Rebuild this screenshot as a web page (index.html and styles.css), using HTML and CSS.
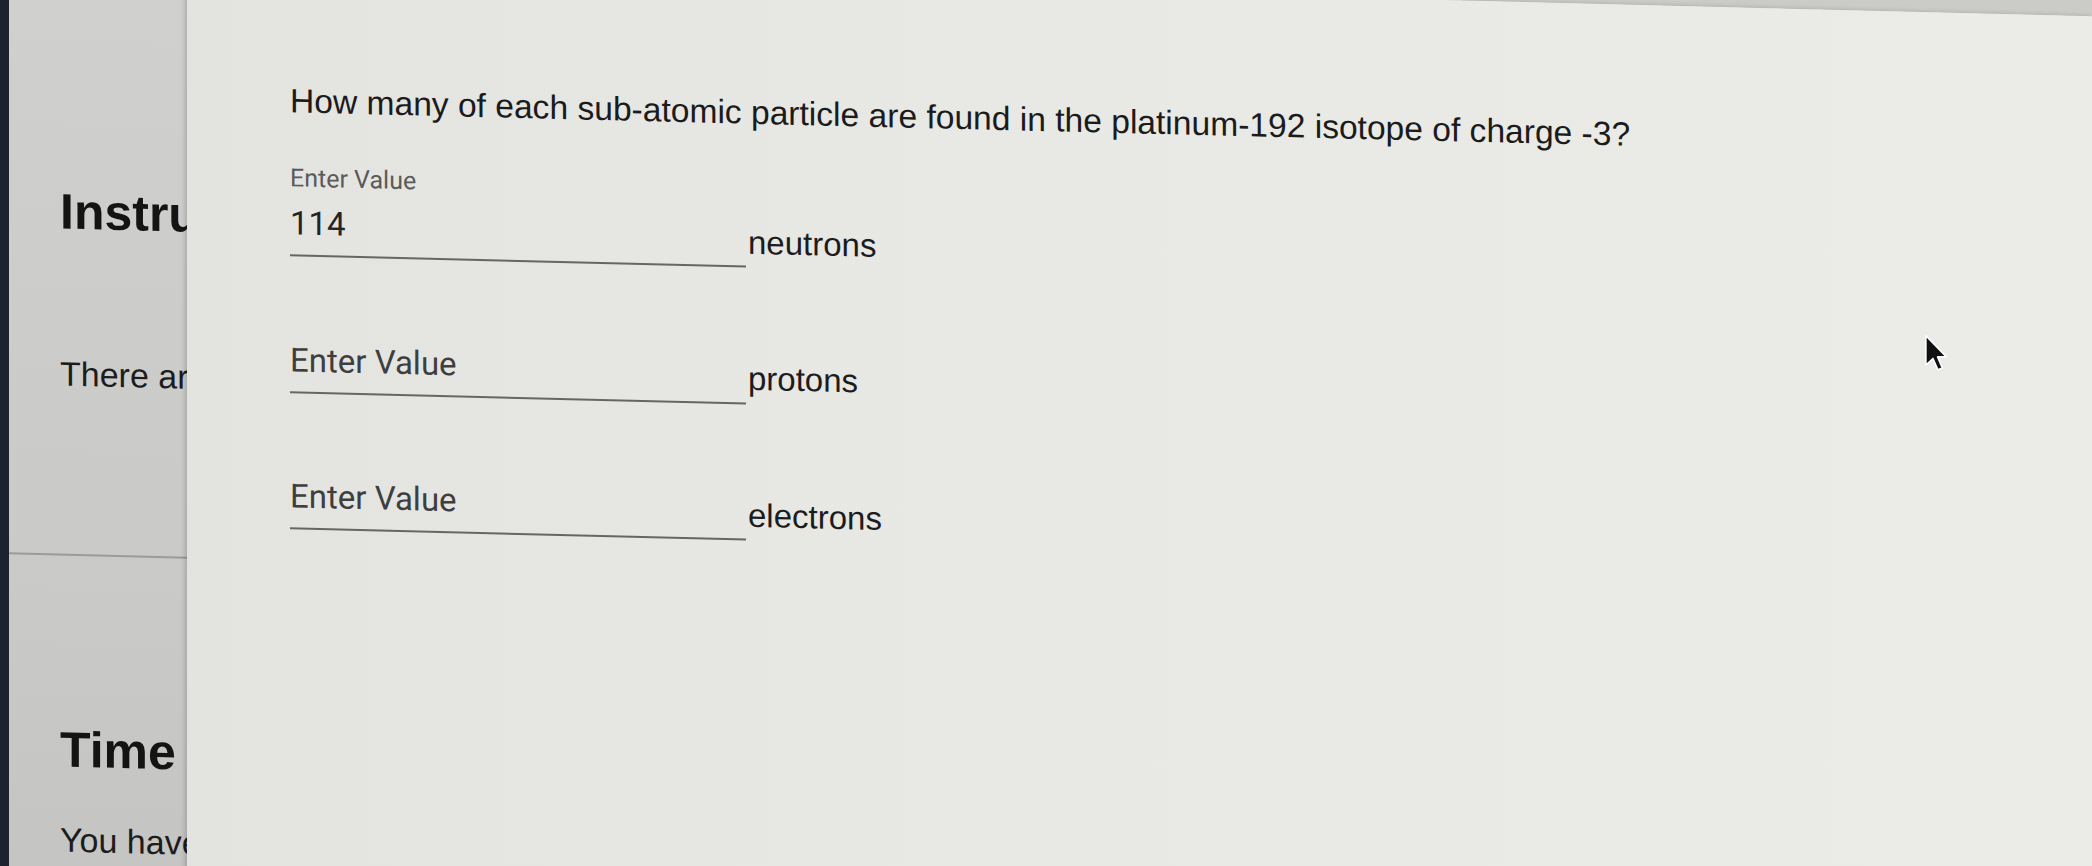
FILE: index.html
```html
<!DOCTYPE html>
<html lang="en">
<head>
<meta charset="utf-8">
<title>Question</title>
<link rel="stylesheet" href="styles.css">
</head>
<body>
<div class="page">
  <div class="edge"></div>
  <aside class="sidebar">
    <h2 class="side-title">Instructions</h2>
    <p class="side-text">There are 10 questions in this assignment.</p>
    <hr class="side-rule">
    <h2 class="side-title time-title">Time</h2>
    <p class="side-text have-text">You have unlimited time to complete this.</p>
  </aside>
  <main class="main">
    <p class="question">How many of each sub-atomic particle are found in the platinum-192 isotope of charge -3?</p>
    <div class="answers">
      <div class="answer-row">
        <div class="field">
          <div class="field-label">Enter Value</div>
          <input class="field-input" type="text" value="114">
        </div>
        <span class="unit">neutrons</span>
      </div>
      <div class="answer-row">
        <div class="field">
          <div class="field-label"></div>
          <input class="field-input" type="text" placeholder="Enter Value">
        </div>
        <span class="unit">protons</span>
      </div>
      <div class="answer-row">
        <div class="field">
          <div class="field-label"></div>
          <input class="field-input" type="text" placeholder="Enter Value">
        </div>
        <span class="unit">electrons</span>
      </div>
    </div>
  </main>
</div>
<svg class="pointer" width="25" height="39" viewBox="0 0 14 22" aria-hidden="true">
  <path d="M1 1 L1 17.5 L5 13.8 L7.8 20.2 L10.3 19.1 L7.6 12.9 L12.6 12.9 Z" fill="#111" stroke="#fff" stroke-width="0.9" stroke-linejoin="round"/>
</svg>
</body>
</html>
```

FILE: styles.css
```css
html, body {
  margin: 0;
  padding: 0;
}

body {
  width: 2092px;
  height: 866px;
  overflow: hidden;
  background: #cbcbc7;
  font-family: "Liberation Sans", Arial, sans-serif;
  position: relative;
}

.page {
  display: flex;
  width: 2092px;
  height: 940px;
  margin-top: -36px;
  transform: skewY(1.43deg);
  transform-origin: 0 0;
}

.edge {
  width: 9px;
  flex: none;
  background: #1c2230;
}

.sidebar {
  width: 178px;
  flex: none;
  overflow: hidden;
  white-space: nowrap;
  background: linear-gradient(180deg, #d0d0ce 0%, #cacac8 60%, #c4c4c2 100%);
  padding: 216px 0 0 51px;
  box-sizing: border-box;
}

.side-title {
  margin: 0;
  font-size: 50px;
  line-height: 60px;
  font-weight: 700;
  color: #141414;
}

.side-text {
  margin: 112px 0 0;
  font-size: 34px;
  line-height: 40px;
  color: #1c1c1c;
}

.side-rule {
  margin: 160px 0 0 -51px;
  width: 200px;
  border: none;
  border-top: 2px solid #9b9b99;
  height: 0;
}

.time-title {
  margin-top: 164px;
}

.have-text {
  margin-top: 40px;
}

.main {
  flex: 1;
  background: linear-gradient(90deg, #e3e3e0 0%, #e8e8e5 40%, #ebebe8 100%);
  box-shadow: -2px 0 5px rgba(0, 0, 0, 0.18);
  padding: 110px 0 0 103px;
}

.question {
  margin: 0;
  font-size: 33.6px;
  line-height: 40px;
  color: #1b1b1b;
  white-space: nowrap;
}

.answers {
  margin-top: 42px;
  display: flex;
  flex-direction: column;
  gap: 43.5px;
}

.answer-row {
  display: flex;
  align-items: flex-end;
}

.field {
  width: 456px;
  display: flex;
  flex-direction: column;
}

.field-label {
  height: 30px;
  font-family: Roboto, "Liberation Sans", sans-serif;
  font-size: 25px;
  line-height: 30px;
  color: #5a5a5a;
}

.field-input {
  margin: 10px 0 0;
  width: 456px;
  box-sizing: content-box;
  height: 40px;
  padding: 0 0 11px;
  border: none;
  border-bottom: 2px solid #666664;
  background: transparent;
  outline: none;
  font-family: Roboto, "Liberation Sans", sans-serif;
  font-size: 33px;
  line-height: 40px;
  color: #242424;
}

.field-input::placeholder {
  color: #3e3e3e;
  opacity: 1;
}

.unit {
  font-size: 33px;
  line-height: 40px;
  padding-bottom: 5.5px;
  padding-left: 2px;
  color: #1c1c1c;
}

.pointer {
  position: absolute;
  left: 1924px;
  top: 334px;
}
```
